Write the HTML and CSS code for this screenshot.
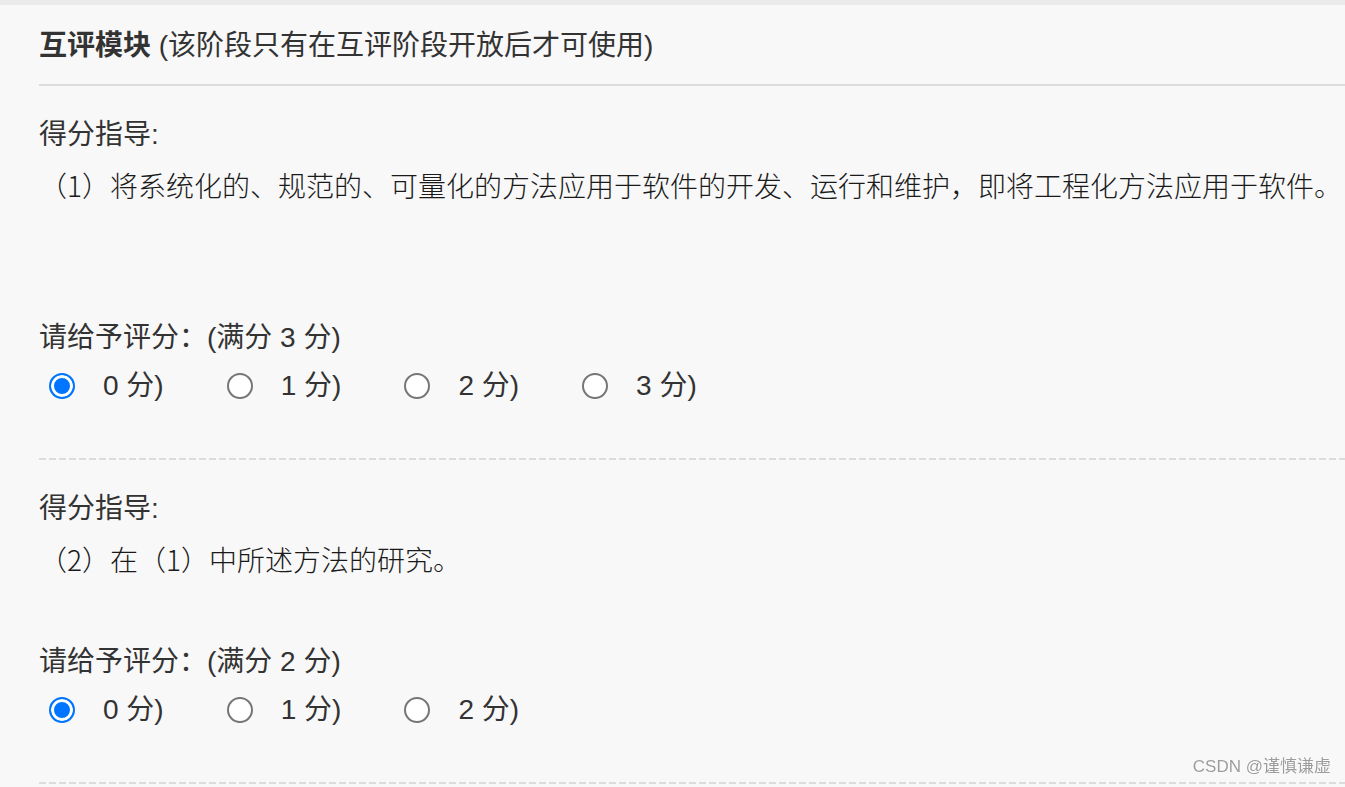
FILE: index.html
```html
<!DOCTYPE html>
<html lang="zh-CN">

<head>
    <meta charset="UTF-8">
    <title>互评模块</title>
    <link rel="stylesheet" href="styles.css">
</head>

<body>
    <div class="page">
        <h2 class="module-title"><b>互评模块</b> (该阶段只有在互评阶段开放后才可使用)</h2>

        <div class="section">
            <div class="guide-title">得分指导:</div>
            <div class="guide">
                <p>（1）将系统化的、规范的、可量化的方法应用于软件的开发、运行和维护，即将工程化方法应用于软件。</p>
                <p><br></p>
            </div>
            <div class="score-title">请给予评分：(满分 3 分)</div>
            <div class="options">
                <label class="option"><input type="radio" name="q1" value="0" checked><span>0 分)</span></label>
                <label class="option"><input type="radio" name="q1" value="1"><span>1 分)</span></label>
                <label class="option"><input type="radio" name="q1" value="2"><span>2 分)</span></label>
                <label class="option"><input type="radio" name="q1" value="3"><span>3 分)</span></label>
            </div>
        </div>

        <div class="section">
            <div class="guide-title">得分指导:</div>
            <div class="guide">
                <p>（2）在（1）中所述方法的研究。</p>
            </div>
            <div class="score-title">请给予评分：(满分 2 分)</div>
            <div class="options">
                <label class="option"><input type="radio" name="q2" value="0" checked><span>0 分)</span></label>
                <label class="option"><input type="radio" name="q2" value="1"><span>1 分)</span></label>
                <label class="option"><input type="radio" name="q2" value="2"><span>2 分)</span></label>
            </div>
        </div>
    </div>

    <div class="watermark">CSDN @谨慎谦虚</div>
</body>

</html>
```

FILE: styles.css
```css
body {
    margin: 0;
    background-color: #f8f8f8;
    font-family: "Liberation Sans", "Noto Sans CJK SC", sans-serif;
    font-size: 28px;
    line-height: 50px;
    color: #333;
    overflow: hidden;
}

.page {
    border-top: 5px solid #ebebeb;
    padding-left: 39px;
}

.module-title {
    margin: 0;
    padding: 16px 0 13px;
    font-size: 28px;
    font-weight: normal;
    border-bottom: 2px solid #dcdcdc;
    white-space: nowrap;
}

.module-title b {
    font-weight: bold;
}

.section {
    padding: 24px 0 51px;
    /* dashed separator */
    background: repeating-linear-gradient(90deg, #dcdcdc 0 7px, transparent 7px 10px) left bottom / 100% 2px no-repeat;
}

.guide p {
    margin: 0;
    white-space: nowrap;
    color: #1a1a1a;
    font-family: "Noto Sans CJK SC", sans-serif;
    font-weight: 300;
}

.guide {
    margin-bottom: 53px;
}

.options {
    display: flex;
    align-items: center;
    height: 46px;
}

.option {
    display: flex;
    align-items: center;
    margin-right: 53px;
}

.option input {
    appearance: none;
    width: 26px;
    height: 26px;
    margin: 0 28px 0 10px;
    border: 2px solid #767676;
    border-radius: 50%;
    background: white;
    box-sizing: border-box;
}

.option input:checked {
    border-color: #0075ff;
    background: #0075ff;
    box-shadow: inset 0 0 0 3px white;
}

.watermark {
    position: fixed;
    right: 14px;
    bottom: 8px;
    font-size: 17px;
    line-height: 24px;
    color: #9d9d9d;
    text-shadow: 0 0 2px white;
}
```
